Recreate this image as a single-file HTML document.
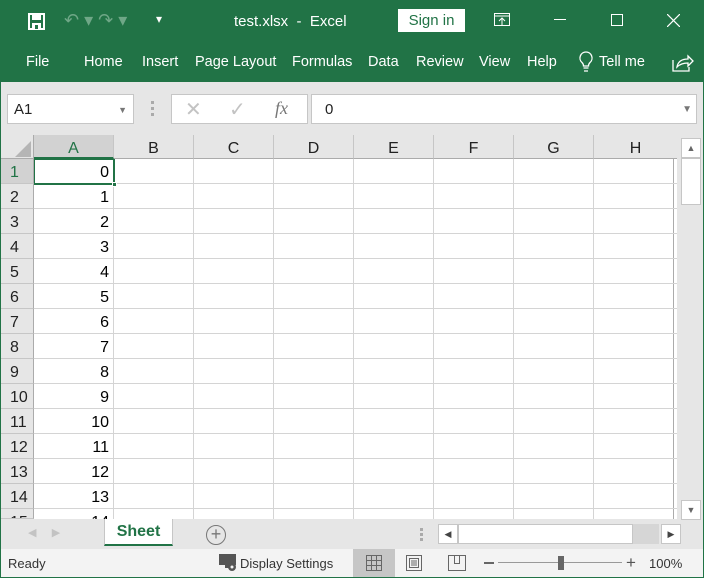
<!DOCTYPE html>
<html><head><meta charset="utf-8"><style>
*{box-sizing:border-box;margin:0;padding:0}
body{width:704px;height:578px;overflow:hidden;font-family:"Segoe UI","Liberation Sans",sans-serif;background:#217346;position:relative}
.abs{position:absolute}
.t{color:#fff;font-size:15px}
.menu span{position:absolute;top:54px;color:#fff;font-size:14.5px}
.main{left:1px;top:82px;width:702px;height:495px;background:#e6e6e6}
.grid{position:absolute;left:34px;top:159px;width:643px;height:360px;background:#fff;overflow:hidden}
.ch{position:absolute;top:135px;height:24px;font-size:16px;color:#222;text-align:center;line-height:27px;border-right:1px solid #c6c6c6;border-bottom:1px solid #ababab;background:#e6e6e6}
.rh{position:absolute;left:1px;width:33px;height:25px;font-size:16px;color:#222;line-height:28px;padding-left:9px;border-bottom:1px solid #c6c6c6;border-right:1px solid #ababab;background:#e6e6e6}
.vl{position:absolute;top:0;width:1px;height:360px;background:#d4d4d4}
.hl{position:absolute;left:0;height:1px;width:643px;background:#d4d4d4}
.v{position:absolute;left:0;width:79px;text-align:right;font-size:16px;color:#000;padding-right:4px;line-height:28px;height:25px}
</style></head><body>
<svg class="abs" style="left:28px;top:13px" width="18" height="18" viewBox="0 0 18 18"><rect x="1" y="1" width="15" height="15" fill="none" stroke="#fff" stroke-width="2"/><rect x="4" y="2" width="9" height="5" fill="#fff"/><rect x="4" y="10" width="9" height="6" fill="#fff"/><rect x="7" y="12" width="3" height="4" fill="#217346"/></svg>
<div class="abs" style="left:64px;top:10px;color:#6fa787;font-size:18px">↶ ▾ ↷ ▾</div>
<div class="abs" style="left:156px;top:12px;color:#fff;font-size:12px">▾</div>
<div class="abs t" style="left:234px;top:13px">test.xlsx&nbsp; - &nbsp;Excel</div>
<div class="abs" style="left:398px;top:9px;width:67px;height:23px;background:#fff;color:#217346;font-size:15px;text-align:center;line-height:24px">Sign in</div>
<svg class="abs" style="left:494px;top:13px" width="16" height="14"><rect x="0.5" y="0.5" width="15" height="12" fill="none" stroke="#fff"/><line x1="0" y1="3" x2="16" y2="3" stroke="#fff"/><path d="M8 12V5M5 8l3-3 3 3" stroke="#fff" fill="none"/></svg>
<div class="abs" style="left:554px;top:19px;width:12px;height:1px;background:#fff"></div>
<div class="abs" style="left:611px;top:14px;width:12px;height:12px;border:1px solid #fff"></div>
<svg class="abs" style="left:667px;top:14px" width="13" height="13"><path d="M0 0L13 13M13 0L0 13" stroke="#fff" stroke-width="1.2"/></svg>
<div class="menu">
<span style="left:26px">File</span><span style="left:84px">Home</span><span style="left:142px">Insert</span><span style="left:195px">Page Layout</span><span style="left:292px">Formulas</span><span style="left:368px">Data</span><span style="left:416px">Review</span><span style="left:479px">View</span><span style="left:527px">Help</span><span style="left:599px">Tell me</span></div>
<svg class="abs" style="left:577px;top:51px" width="18" height="22"><path d="M9 1a6 6 0 0 0-4 10.5c1 1 1.5 2 1.5 3.5h5c0-1.5.5-2.5 1.5-3.5A6 6 0 0 0 9 1z" fill="none" stroke="#fff" stroke-width="1.3"/><path d="M6.5 17h5M7 20h4" stroke="#fff" stroke-width="1.3"/></svg>
<svg class="abs" style="left:672px;top:52px" width="22" height="20"><path d="M1 8v11h16v-4" fill="none" stroke="#fff" stroke-width="1.3"/><path d="M5 15c1-6 5-8 11-8V4l5 5-5 5v-3c-5 0-8 1-11 4z" fill="none" stroke="#fff" stroke-width="1.3"/></svg>
<div class="abs main"></div>
<div class="abs" style="left:7px;top:94px;width:127px;height:30px;background:#fff;border:1px solid #c6c6c6;font-size:15px;line-height:30px;padding-left:6px;color:#222">A1<span style="position:absolute;right:6px;top:0;font-size:9px;color:#777">▼</span></div>
<div class="abs" style="left:151px;top:101px;width:3px;height:16px;background:repeating-linear-gradient(#aaa 0 3px,transparent 3px 6px)"></div>
<div class="abs" style="left:171px;top:94px;width:137px;height:30px;background:#fff;border:1px solid #c6c6c6"></div>
<div class="abs" style="left:185px;top:97px;color:#c3c3c3;font-size:20px">✕</div>
<div class="abs" style="left:229px;top:97px;color:#c3c3c3;font-size:20px">✓</div>
<div class="abs" style="left:275px;top:98px;color:#777;font-size:18px;font-style:italic;font-family:'Liberation Serif',serif">fx</div>
<div class="abs" style="left:311px;top:94px;width:386px;height:30px;background:#fff;border:1px solid #c6c6c6;font-size:15px;line-height:30px;padding-left:13px;color:#222">0<span style="position:absolute;right:4px;top:0;font-size:10px;color:#777">▼</span></div>
<div class="abs" style="left:1px;top:135px;width:33px;height:24px;background:#e6e6e6;border-right:1px solid #ababab;border-bottom:1px solid #ababab"></div>
<svg class="abs" style="left:15px;top:141px" width="17" height="17"><path d="M16 0V16H0z" fill="#b5b5b5"/></svg>
<div class="ch" style="left:34px;width:80px;background:#d2d2d2;border-bottom:2px solid #217346;color:#217346">A</div>
<div class="ch" style="left:114px;width:80px">B</div>
<div class="ch" style="left:194px;width:80px">C</div>
<div class="ch" style="left:274px;width:80px">D</div>
<div class="ch" style="left:354px;width:80px">E</div>
<div class="ch" style="left:434px;width:80px">F</div>
<div class="ch" style="left:514px;width:80px">G</div>
<div class="ch" style="left:594px;width:83px;border-right:none">H</div>
<div class="rh" style="top:159px;background:#d2d2d2;color:#217346">1</div>
<div class="rh" style="top:184px">2</div><div class="rh" style="top:209px">3</div><div class="rh" style="top:234px">4</div><div class="rh" style="top:259px">5</div><div class="rh" style="top:284px">6</div><div class="rh" style="top:309px">7</div><div class="rh" style="top:334px">8</div><div class="rh" style="top:359px">9</div><div class="rh" style="top:384px">10</div><div class="rh" style="top:409px">11</div><div class="rh" style="top:434px">12</div><div class="rh" style="top:459px">13</div><div class="rh" style="top:484px">14</div><div class="rh" style="top:509px;height:10px;overflow:hidden">15</div>
<div class="grid">
<div class="vl" style="left:79px"></div><div class="vl" style="left:159px"></div><div class="vl" style="left:239px"></div><div class="vl" style="left:319px"></div><div class="vl" style="left:399px"></div><div class="vl" style="left:479px"></div><div class="vl" style="left:559px"></div><div class="vl" style="left:639px;background:#ababab"></div>
<div class="hl" style="top:24px"></div><div class="hl" style="top:49px"></div><div class="hl" style="top:74px"></div><div class="hl" style="top:99px"></div><div class="hl" style="top:124px"></div><div class="hl" style="top:149px"></div><div class="hl" style="top:174px"></div><div class="hl" style="top:199px"></div><div class="hl" style="top:224px"></div><div class="hl" style="top:249px"></div><div class="hl" style="top:274px"></div><div class="hl" style="top:299px"></div><div class="hl" style="top:324px"></div><div class="hl" style="top:349px"></div>
<div class="v" style="top:0">0</div><div class="v" style="top:25px">1</div><div class="v" style="top:50px">2</div><div class="v" style="top:75px">3</div><div class="v" style="top:100px">4</div><div class="v" style="top:125px">5</div><div class="v" style="top:150px">6</div><div class="v" style="top:175px">7</div><div class="v" style="top:200px">8</div><div class="v" style="top:225px">9</div><div class="v" style="top:250px">10</div><div class="v" style="top:275px">11</div><div class="v" style="top:300px">12</div><div class="v" style="top:325px">13</div><div class="v" style="top:350px">14</div>
<div style="position:absolute;left:-1px;top:-1px;width:82px;height:27px;border:2px solid #217346"></div>
<div style="position:absolute;left:78px;top:23px;width:5px;height:5px;background:#217346;border:1px solid #fff"></div>
</div>
<div class="abs" style="left:680px;top:137px;width:22px;height:384px;background:#e6e6e6"></div>
<div class="abs" style="left:681px;top:138px;width:20px;height:20px;background:#fff;border:1px solid #c6c6c6;font-size:9px;color:#666;text-align:center;line-height:18px">▲</div>
<div class="abs" style="left:681px;top:158px;width:20px;height:47px;background:#fff;border:1px solid #c6c6c6"></div>
<div class="abs" style="left:681px;top:500px;width:20px;height:20px;background:#fff;border:1px solid #c6c6c6;font-size:9px;color:#666;text-align:center;line-height:18px">▼</div>
<div class="abs" style="left:28px;top:526px;color:#c3c3c3;font-size:11px">◀&nbsp;&nbsp;&nbsp;&nbsp;&nbsp;▶</div>
<div class="abs" style="left:104px;top:519px;width:69px;height:27px;background:#fff;border-left:1px solid #c6c6c6;border-right:1px solid #c6c6c6;border-bottom:2px solid #217346;color:#217346;font-weight:bold;font-size:16px;text-align:center;line-height:25px">Sheet</div>
<div class="abs" style="left:206px;top:525px;width:20px;height:20px;border:1.5px solid #777;border-radius:50%;color:#777;text-align:center;line-height:17px;font-size:18px">+</div>
<div class="abs" style="left:420px;top:528px;width:3px;height:13px;background:repeating-linear-gradient(#aaa 0 3px,transparent 3px 5px)"></div>
<div class="abs" style="left:438px;top:524px;width:20px;height:20px;background:#fff;border:1px solid #c6c6c6;font-size:9px;color:#444;text-align:center;line-height:18px">◀</div>
<div class="abs" style="left:458px;top:524px;width:175px;height:20px;background:#fff;border:1px solid #c6c6c6"></div>
<div class="abs" style="left:633px;top:524px;width:26px;height:20px;background:#d6d6d6"></div>
<div class="abs" style="left:661px;top:524px;width:20px;height:20px;background:#fff;border:1px solid #c6c6c6;font-size:9px;color:#444;text-align:center;line-height:18px">▶</div>
<div class="abs" style="left:1px;top:549px;width:702px;height:28px;background:#f3f3f3"></div>
<div class="abs" style="left:8px;top:556px;font-size:13px;color:#333">Ready</div>
<svg class="abs" style="left:219px;top:553px" width="20" height="20"><rect x="0" y="1" width="17" height="11" fill="#555"/><rect x="6" y="12" width="4" height="3" fill="#555"/><circle cx="13" cy="14" r="4" fill="#555"/><circle cx="13" cy="14" r="1.5" fill="#f3f3f3"/></svg>
<div class="abs" style="left:240px;top:556px;font-size:13px;color:#333">Display Settings</div>
<div class="abs" style="left:353px;top:549px;width:42px;height:28px;background:#c6c6c6"></div>
<svg class="abs" style="left:366px;top:555px" width="16" height="16"><path d="M.5.5h15v15H.5zM5.5.5v15M10.5.5v15M.5 5.5h15M.5 10.5h15" fill="none" stroke="#666"/></svg>
<svg class="abs" style="left:406px;top:555px" width="16" height="16"><rect x=".5" y=".5" width="15" height="15" fill="none" stroke="#666"/><rect x="3.5" y="3.5" width="9" height="9" fill="none" stroke="#666"/><path d="M5 6h6M5 8h6M5 10h6" stroke="#666"/></svg>
<svg class="abs" style="left:448px;top:555px" width="18" height="16"><path d="M.5.5h17v15H.5zM6.5.5v8h5V.5" fill="none" stroke="#666"/></svg>
<div class="abs" style="left:484px;top:562px;width:10px;height:2px;background:#666"></div>
<div class="abs" style="left:498px;top:562px;width:124px;height:1px;background:#999"></div>
<div class="abs" style="left:558px;top:556px;width:6px;height:14px;background:#666"></div>
<div class="abs" style="left:626px;top:553px;font-size:17px;color:#555">+</div>
<div class="abs" style="left:649px;top:556px;font-size:13px;color:#333">100%</div>
</body></html>
